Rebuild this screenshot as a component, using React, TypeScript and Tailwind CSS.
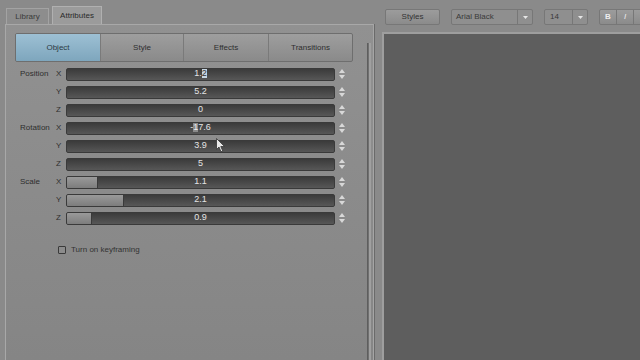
import React from "react";

const rows = [
  { label: "Position", axis: "X", value: "1.2", fill: 0, sel: "2" },
  { label: "", axis: "Y", value: "5.2", fill: 0 },
  { label: "", axis: "Z", value: "0", fill: 0 },
  { label: "Rotation", axis: "X", value: "-17.6", fill: 0, sel2: true },
  { label: "", axis: "Y", value: "3.9", fill: 0 },
  { label: "", axis: "Z", value: "5", fill: 0 },
  { label: "Scale", axis: "X", value: "1.1", fill: 31 },
  { label: "", axis: "Y", value: "2.1", fill: 57 },
  { label: "", axis: "Z", value: "0.9", fill: 25 },
];

function Spinner() {
  return (
    <div className="ml-[3px] flex h-[13px] w-[7px] flex-col items-center justify-center gap-[2px]">
      <svg width="6" height="4" viewBox="0 0 6 4"><path d="M0 4 L3 0 L6 4 Z" fill="#d8d8d8" /></svg>
      <svg width="6" height="4" viewBox="0 0 6 4"><path d="M0 0 L3 4 L6 0 Z" fill="#d8d8d8" /></svg>
    </div>
  );
}

function Arrow() {
  return (
    <svg width="5" height="3" viewBox="0 0 5 3"><path d="M0 0 L5 0 L2.5 3 Z" fill="#e6e6e6" /></svg>
  );
}

export default function App() {
  return (
    <div
      className="relative flex h-[360px] w-[640px] overflow-hidden bg-[#8a8a8a] text-[8px] text-[#2e2e2e]"
      style={{ fontFamily: '"Liberation Sans", Arial, sans-serif' }}
    >
      {/* Left column */}
      <div className="flex w-[373px] shrink-0 flex-col pl-[5px]">
        <div className="flex h-[24px] items-end gap-[3px] pl-[1px]">
          <div className="flex h-[16px] w-[43px] items-center justify-center border border-b-0 border-[#a3a3a3] bg-[#8d8d8d] text-[#3a3a3a]">
            Library
          </div>
          <div className="flex h-[18px] w-[50px] items-center justify-center border border-b-0 border-[#b0b0b0] bg-[#9b9b9b] text-[#2a2a2a]">
            Attributes
          </div>
        </div>
        <div className="flex flex-1 border-l border-t border-[#a8a8a8] bg-gradient-to-b from-[#919191] to-[#858585]">
          <div className="w-[347px] pl-[9px] pt-[8px]">
            {/* Sub tabs */}
            <div className="flex h-[29px] w-[338px] overflow-hidden rounded-[2px] border border-[#6e6e6e] bg-gradient-to-b from-[#9e9e9e] to-[#8a8a8a]">
              <div className="flex w-[85px] items-center justify-center border-r border-[#7a7a7a] bg-gradient-to-b from-[#9dc0d4] to-[#7ea6bd] text-[#2c3a44]">
                Object
              </div>
              <div className="flex w-[83px] items-center justify-center border-r border-[#7a7a7a]">Style</div>
              <div className="flex w-[85px] items-center justify-center border-r border-[#7a7a7a]">Effects</div>
              <div className="flex flex-1 items-center justify-center">Transitions</div>
            </div>
            {/* Rows */}
            <div className="mt-[3px] flex flex-col">
              {rows.map((r, i) => (
                <div key={i} className="flex h-[18px] items-center">
                  <div className="w-[41px] pl-[5px] text-[#2e2e2e]">{r.label}</div>
                  <div className="w-[10px] text-[#2e2e2e]">{r.axis}</div>
                  <div className="relative flex h-[13px] w-[269px] items-center justify-center overflow-hidden rounded-[2px] border border-[#3a3a3a] bg-gradient-to-b from-[#3b3b3b] to-[#575757]">
                    {r.fill > 0 && (
                      <div
                        className="absolute left-0 top-0 h-full border-r border-[#3a3a3a] bg-gradient-to-b from-[#9a9a9a] to-[#7d7d7d]"
                        style={{ width: r.fill }}
                      />
                    )}
                    <span className="relative text-[9px] text-[#e4e4e4]">
                      {r.sel ? (
                        <>
                          1.<span className="bg-[#c7d6e2] text-[#333]">2</span>
                        </>
                      ) : r.sel2 ? (
                        <>
                          -<span className="bg-[#8a8a8a] text-[#eee]">1</span>7.6
                        </>
                      ) : (
                        r.value
                      )}
                    </span>
                  </div>
                  <Spinner />
                </div>
              ))}
            </div>
            <div className="mt-[17px] flex h-[12px] items-center pl-[43px]">
              <div className="h-[8px] w-[8px] rounded-[1px] border border-[#3a3a3a] bg-[#8c8c8c]" />
              <span className="ml-[5px] text-[#333]">Turn on keyframing</span>
            </div>
          </div>
          <div className="flex w-[20px] pl-[14px] pt-[18px]">
            <div className="w-[2px] border-l border-[#5e5e5e] bg-[#707070]" />
            <div className="w-[2px] bg-[#a0a0a0]" />
          </div>
        </div>
      </div>

      {/* Divider */}
      <div className="flex w-[9px] shrink-0 pt-[24px]">
        <div className="w-[1px] bg-[#a5a5a5]" />
        <div className="w-[1px] bg-[#6a6a6a]" />
      </div>

      {/* Right column */}
      <div className="flex min-w-0 flex-1 flex-col overflow-hidden">
        <div className="flex h-[32px] shrink-0 items-start gap-[11px] pl-[3px] pt-[9px]">
          <div className="flex h-[16px] w-[55px] shrink-0 items-center justify-center rounded-[2px] border border-[#777] bg-gradient-to-b from-[#9c9c9c] to-[#8b8b8b] text-[#333]">
            Styles
          </div>
          <div className="flex h-[16px] w-[82px] shrink-0 rounded-[2px] border border-[#777] bg-[#8f8f8f]">
            <div className="flex flex-1 items-center pl-[4px] text-[#3a3a3a]">Arial Black</div>
            <div className="flex w-[15px] items-center justify-center border-l border-[#777]">
              <Arrow />
            </div>
          </div>
          <div className="flex h-[16px] w-[44px] shrink-0 rounded-[2px] border border-[#777] bg-[#8f8f8f]">
            <div className="flex flex-1 items-center pl-[5px] text-[#3a3a3a]">14</div>
            <div className="flex w-[15px] items-center justify-center border-l border-[#777]">
              <Arrow />
            </div>
          </div>
          <div className="flex h-[16px] shrink-0 overflow-hidden rounded-[2px] border border-[#777] bg-gradient-to-b from-[#9c9c9c] to-[#8b8b8b]">
            <div className="flex w-[17px] items-center justify-center border-r border-[#777] font-bold text-[#eee]">B</div>
            <div className="flex w-[17px] items-center justify-center border-r border-[#777] italic text-[#eee]">I</div>
            <div className="w-[17px]" />
          </div>
        </div>
        <div className="flex-1 border-l-2 border-t-2 border-[#9e9e9e] bg-[#5e5e5e]" />
      </div>

      {/* Cursor */}
      <svg className="absolute left-[216px] top-[138px]" width="10" height="15" viewBox="0 0 10 15">
        <path d="M0.5 0.5 L0.5 11.5 L3 9 L5 13.8 L6.8 13 L4.8 8.5 L8.5 8.5 Z" fill="#e8e8e8" stroke="#333" strokeWidth="0.8" />
      </svg>
    </div>
  );
}
